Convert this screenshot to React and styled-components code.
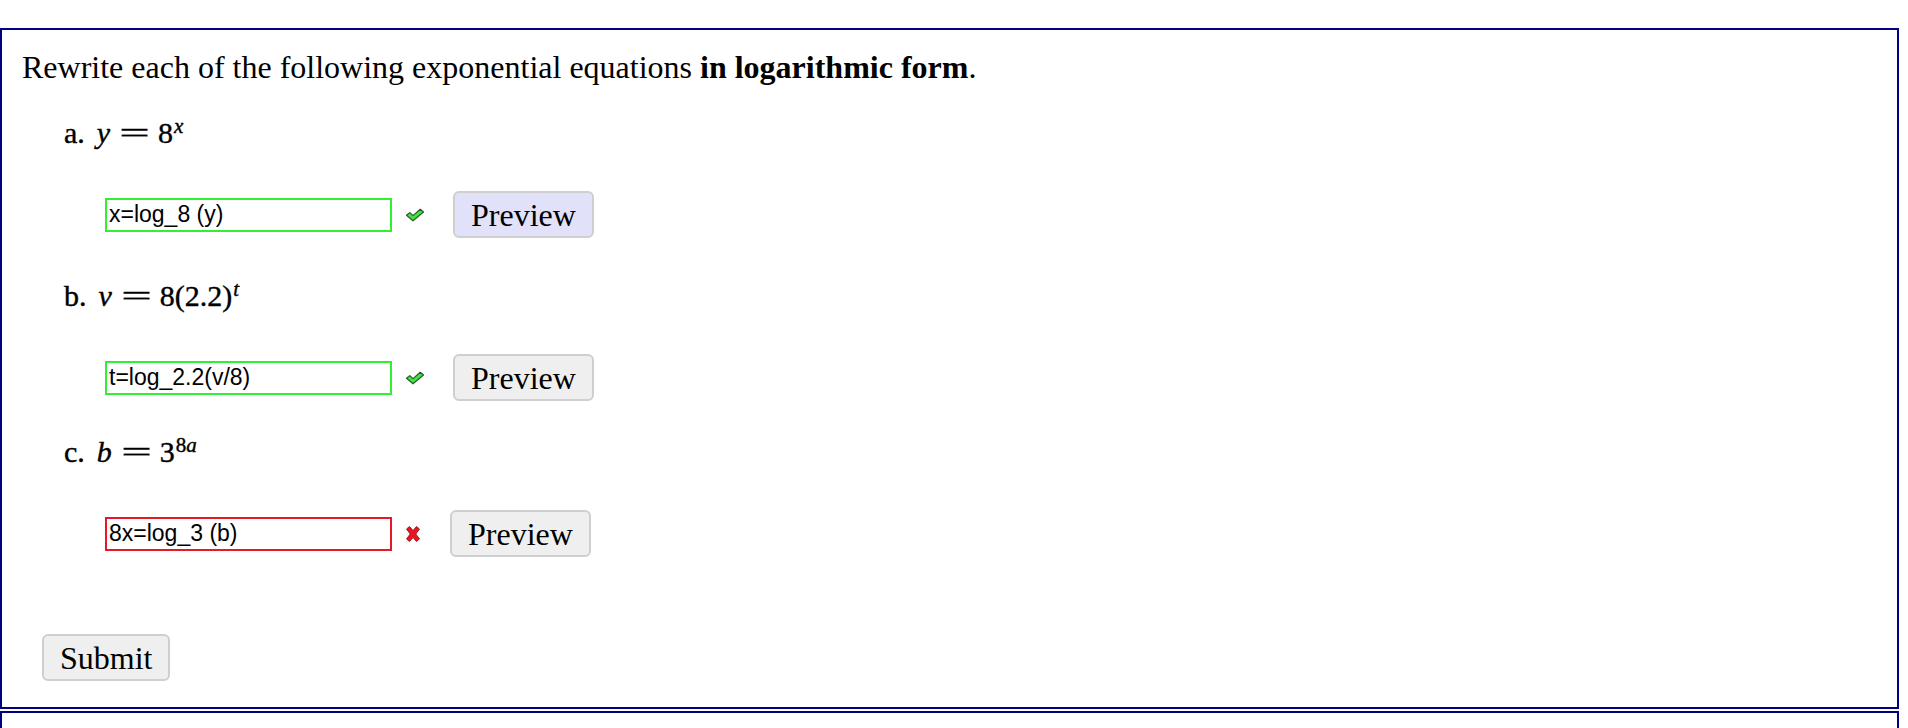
import React from 'react';
import styled, { createGlobalStyle } from 'styled-components';

const GlobalStyle = createGlobalStyle`
  body {
    margin: 0;
    background: #fff;
    font-family: "Liberation Serif", "Times New Roman", serif;
    color: #000;
  }
`;

const Frame = styled.div`
  box-sizing: border-box;
  width: 1899px;
  margin-top: 28px;
  border: 2px solid #000080;
  padding: 20px 20px 26px 20px;
`;

const NextFrame = styled.div`
  box-sizing: border-box;
  width: 1899px;
  height: 40px;
  margin-top: 2px;
  border: 2px solid #000080;
  border-bottom: none;
`;

const Title = styled.p`
  margin: 0;
  font-size: 32px;
  line-height: 34px;
`;

const Problem = styled.div`
  margin-top: ${(p) => p.$top}px;
`;

const MathLine = styled.div`
  display: flex;
  align-items: baseline;
  margin-left: 42px;
  font-size: 30px;
  line-height: 34px;
  white-space: nowrap;
  -webkit-text-stroke: 0.4px #000;
`;

const Label = styled.span`
  margin-right: 12px;
`;

const Var = styled.i`
  font-family: "Liberation Serif", serif;
`;

const Sup = styled.span`
  font-size: 21px;
  position: relative;
  top: -10px;
  margin-left: 1px;
`;

const Eq = styled.span`
  display: inline-block;
  margin: 0 12px 0 13px;
  transform: scaleX(1.8);
  transform-origin: center;
  padding: 0 3px;
`;

const AnswerRow = styled.div`
  display: flex;
  align-items: center;
  margin-top: ${(p) => p.$top}px;
  margin-left: 83px;
  height: 47px;
`;

const AnswerInput = styled.input`
  box-sizing: border-box;
  width: 287px;
  height: 34px;
  border: 2px solid ${(p) => (p.$ok ? '#33ee33' : '#e8182a')};
  padding: 0 2px;
  font-family: "Liberation Sans", Arial, sans-serif;
  font-size: 23px;
  color: #000;
  outline: none;
`;

const Mark = styled.span`
  display: inline-flex;
  margin-left: 13px;
  margin-right: ${(p) => (p.$ok ? 28 : 29)}px;
`;

const Button = styled.button`
  box-sizing: border-box;
  height: 47px;
  padding: 0 16px;
  font-family: "Liberation Serif", "Times New Roman", serif;
  font-size: 32px;
  line-height: 1;
  color: #000;
  background: ${(p) => (p.$active ? '#e1e1f9' : '#efefef')};
  border: 2px solid #cfcfcf;
  border-radius: 6px;
  cursor: pointer;
`;

const SubmitWrap = styled.div`
  margin-top: 77px;
  margin-left: 20px;
`;

const CheckIcon = () => (
  <svg width="20" height="14" viewBox="0 0 20 14">
    <path
      d="M1.5 7.2 L4.8 4.6 L8 7.6 L15.2 1.3 L18.5 4 L8 12.8 Z"
      fill="#3ee63e"
      stroke="#2d5a2d"
      strokeWidth="1.2"
      strokeLinejoin="round"
    />
  </svg>
);

const CrossIcon = () => (
  <svg width="16" height="18" viewBox="0 0 16 18">
    <path
      d="M1.5 4 L4.5 1.5 L8 5.5 L11.5 1.5 L14.5 4 L10.8 9 L14.5 14 L11.5 16.5 L8 12.5 L4.5 16.5 L1.5 14 L5.2 9 Z"
      fill="#ee1122"
      stroke="#8a1a1a"
      strokeWidth="0.9"
      strokeLinejoin="round"
    />
  </svg>
);

const problems = [
  {
    label: 'a.',
    math: (
      <>
        <Var>y</Var>
        <Eq>=</Eq>8<Sup><Var>x</Var></Sup>
      </>
    ),
    answer: 'x=log_8 (y)',
    ok: true,
    active: true,
    top: 32,
  },
  {
    label: 'b.',
    math: (
      <>
        <Var>v</Var>
        <Eq>=</Eq>8(2.2)<Sup><Var>t</Var></Sup>
      </>
    ),
    answer: 't=log_2.2(v/8)',
    ok: true,
    top: 41,
  },
  {
    label: 'c.',
    math: (
      <>
        <Var>b</Var>
        <Eq>=</Eq>3<Sup>8<Var>a</Var></Sup>
      </>
    ),
    answer: '8x=log_3 (b)',
    ok: false,
    top: 34,
  },
];

export default function App() {
  return (
    <>
      <GlobalStyle />
      <Frame>
        <Title>
          Rewrite each of the following exponential equations <b>in logarithmic form</b>.
        </Title>
        {problems.map((p) => (
          <Problem key={p.label} $top={p.top}>
            <MathLine>
              <Label>{p.label}</Label>
              {p.math}
            </MathLine>
            <AnswerRow $top={38}>
              <AnswerInput $ok={p.ok} defaultValue={p.answer} />
              <Mark $ok={p.ok}>{p.ok ? <CheckIcon /> : <CrossIcon />}</Mark>
              <Button $active={p.active}>Preview</Button>
            </AnswerRow>
          </Problem>
        ))}
        <SubmitWrap>
          <Button>Submit</Button>
        </SubmitWrap>
      </Frame>
      <NextFrame />
    </>
  );
}
